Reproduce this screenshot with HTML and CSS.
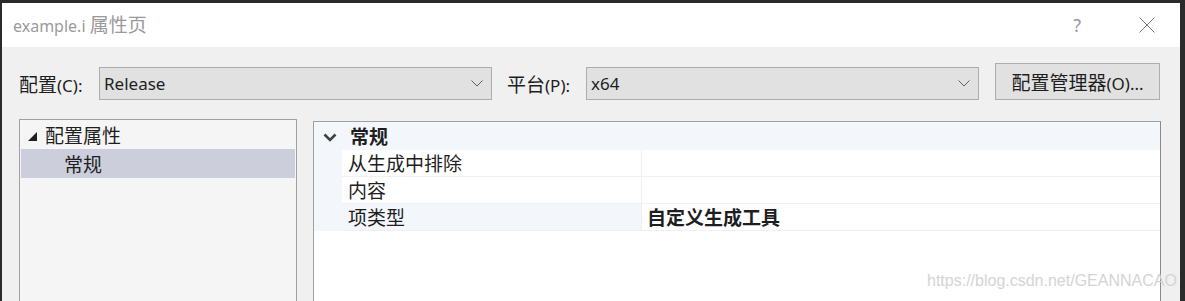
FILE: index.html
```html
<!DOCTYPE html>
<html lang="zh-CN">
<head>
    <meta charset="UTF-8">
    <title>example.i 属性页</title>
    <link rel="stylesheet" href="styles.css">
</head>
<body>
    <div class="window">
        <div class="titlebar">
            <span class="title"><span class="lat">example.i </span>属性页</span>
            <div class="title-buttons">
                <span class="help lat">?</span>
                <svg class="close" width="16" height="16" viewBox="0 0 16 16">
                    <path d="M0.5 0.5 L15.5 15.5 M15.5 0.5 L0.5 15.5" stroke="#7a7a7a" stroke-width="1" fill="none"/>
                </svg>
            </div>
        </div>

        <div class="content">
            <div class="config-row">
                <label class="field-label">配置<span class="lat">(C):</span></label>
                <div class="combo">
                    <span class="lat">Release</span>
                    <svg class="chevron" width="12" height="7" viewBox="0 0 12 7">
                        <path d="M0.5 0.5 L6 6 L11.5 0.5" stroke="#606060" stroke-width="1" fill="none"/>
                    </svg>
                </div>
                <label class="field-label platform">平台<span class="lat">(P):</span></label>
                <div class="combo">
                    <span class="lat">x64</span>
                    <svg class="chevron" width="12" height="7" viewBox="0 0 12 7">
                        <path d="M0.5 0.5 L6 6 L11.5 0.5" stroke="#606060" stroke-width="1" fill="none"/>
                    </svg>
                </div>
                <button class="manager-btn">配置管理器<span class="lat">(O)...</span></button>
            </div>

            <div class="panels">
                <div class="tree">
                    <div class="tree-item">
                        <svg class="expander" width="9" height="9" viewBox="0 0 9 9">
                            <path d="M9 0 L9 9 L0 9 Z" fill="#1e1e1e"/>
                        </svg>
                        <span>配置属性</span>
                    </div>
                    <div class="tree-item child selected">常规</div>
                </div>

                <div class="grid">
                    <div class="grid-category">
                        <span class="cat-toggle">
                            <svg width="14" height="9" viewBox="0 0 14 9">
                                <path d="M1.5 1.5 L7 7 L12.5 1.5" stroke="#424242" stroke-width="2.6" fill="none"/>
                            </svg>
                        </span>
                        <span class="cat-name">常规</span>
                    </div>
                    <div class="grid-row">
                        <span class="margin"></span>
                        <span class="prop-name">从生成中排除</span>
                        <span class="prop-value"></span>
                    </div>
                    <div class="grid-row">
                        <span class="margin"></span>
                        <span class="prop-name">内容</span>
                        <span class="prop-value"></span>
                    </div>
                    <div class="grid-row current">
                        <span class="margin"></span>
                        <span class="prop-name">项类型</span>
                        <span class="prop-value bold">自定义生成工具</span>
                    </div>
                </div>
            </div>
        </div>
    </div>

    <div class="watermark">https://blog.csdn.net/GEANNACAO</div>
</body>
</html>
```

FILE: styles.css
```css
body {
    margin: 0;
    height: 301px;
    overflow: hidden;
    background-color: #2b2b2b;
    padding: 3px 5px 0 2px;
    box-sizing: border-box;
    font-family: "Noto Sans CJK SC", "Noto Sans", sans-serif;
    font-size: 19px;
    color: #1e1e1e;
    position: relative;
}
.lat {
    font-family: "Noto Sans", sans-serif;
    font-size: 17px;
}
.window {
    height: 100%;
    display: flex;
    flex-direction: column;
    background-color: #f0f0f0;
    overflow: hidden;
}
.titlebar {
    flex-shrink: 0;
    height: 44px;
    background-color: white;
    display: flex;
    align-items: center;
    justify-content: space-between;
    padding: 0 25px 0 11px;
}
.title {
    color: #9a9a9a;
    line-height: 22px;
}
.title .lat {
    font-size: 16px;
}
.title-buttons {
    display: flex;
    align-items: center;
    gap: 58px;
}
.help {
    color: #9a9a9a;
    font-size: 18px;
    line-height: 20px;
}
.close {
    display: block;
}
.content {
    flex: 1;
    display: flex;
    flex-direction: column;
    padding: 16px 0 0 17px;
}
.config-row {
    display: flex;
    align-items: flex-end;
    flex-shrink: 0;
}
.field-label {
    width: 80px;
    height: 33px;
    line-height: 33px;
}
.field-label.platform {
    width: 79px;
    margin-left: 15px;
}
.combo {
    width: 393px;
    height: 33px;
    box-sizing: border-box;
    border: 1px solid #adadad;
    background-color: #e1e1e1;
    display: flex;
    align-items: center;
    justify-content: space-between;
    padding: 0 8px 0 4px;
    line-height: 20px;
}
.chevron {
    display: block;
}
.manager-btn {
    margin-left: 16px;
    width: 165px;
    height: 37px;
    border: 1px solid #adadad;
    background-color: #e1e1e1;
    font-family: inherit;
    font-size: 19px;
    color: #1e1e1e;
    padding: 0;
}
.panels {
    display: flex;
    gap: 16px;
    margin-top: 19px;
}
.tree {
    width: 278px;
    height: 200px;
    box-sizing: border-box;
    border: 1px solid #a0a0a0;
    background-color: #f5f5f5;
    padding: 1px 1px 0 1px;
}
.tree-item {
    height: 28px;
    display: flex;
    align-items: center;
    padding-left: 7px;
    line-height: 20px;
}
.tree-item span {
    margin-left: 8px;
}
.expander {
    display: block;
    margin-top: 3px;
}
.tree-item.child {
    padding-left: 43px;
    height: 29px;
}
.tree-item.selected {
    background-color: #cccedb;
}
.grid {
    width: 848px;
    height: 200px;
    margin-top: 2px;
    box-sizing: border-box;
    border: 1px solid #a0a0a0;
    border-right-color: #8a8a8a;
    background-color: white;
}
.grid-category {
    height: 28px;
    display: flex;
    align-items: center;
    background-color: #f3f6fb;
    line-height: 20px;
}
.cat-toggle {
    width: 28px;
    display: flex;
    justify-content: center;
    padding-top: 2px;
    padding-left: 2px;
}
.cat-toggle svg {
    display: block;
}
.cat-name {
    font-weight: bold;
    margin-left: 6px;
}
.grid-row {
    height: 27px;
    display: flex;
    line-height: 26px;
}
.margin {
    width: 28px;
    background-color: #f3f6fb;
}
.prop-name {
    width: 293px;
    padding-left: 6px;
    border-bottom: 1px solid #f0f0f0;
    border-right: 1px solid #f0f0f0;
}
.prop-value {
    flex: 1;
    padding-left: 5px;
    border-bottom: 1px solid #f0f0f0;
}
.grid-row.current .prop-name {
    background-color: #f3f6fb;
}
.bold {
    font-weight: bold;
}
.watermark {
    position: absolute;
    left: 927px;
    top: 272px;
    font-family: "Liberation Sans", Arial, sans-serif;
    font-size: 16px;
    color: #d4d4d4;
    white-space: nowrap;
}
```
